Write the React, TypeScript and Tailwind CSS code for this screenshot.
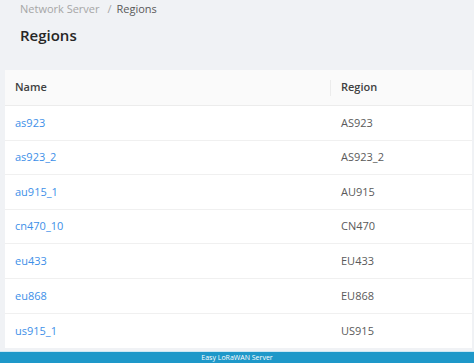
import React from "react";

const rows = [
  ["as923", "AS923"],
  ["as923_2", "AS923_2"],
  ["au915_1", "AU915"],
  ["cn470_10", "CN470"],
  ["eu433", "EU433"],
  ["eu868", "EU868"],
  ["us915_1", "US915"],
];

export default function App() {
  return (
    <div
      className="w-[474px] h-[363px] overflow-hidden bg-[#f0f2f5] flex flex-col"
      style={{ fontFamily: '"Open Sans", "Noto Sans", sans-serif' }}
    >
      <div className="h-[70px] bg-[#f0f2f5] pl-[20px] flex flex-col">
        <div className="text-[11px] leading-[18px] mt-0 text-[#a6a6a6]">
          Network Server <span className="mx-[5px]">/</span>
          <span className="text-[#595959]">Regions</span>
        </div>
        <div className="mt-[7px] text-[15px] font-semibold leading-[20px] text-[#262626]">
          Regions
        </div>
      </div>
      <div className="ml-[5px] mr-[2px] bg-white">
        <div className="h-[36px] bg-[#fafafa] border-b border-[#ececec] flex items-center text-[11px] font-semibold text-[#404040]">
          <div className="w-[326px] pl-[10px] relative h-full flex items-center">
            Name
            <div className="absolute right-0 top-[10px] h-[16px] w-px bg-[#ececec]" />
          </div>
          <div className="pl-[10px]">Region</div>
        </div>
        {rows.map(([n, r], i) => (
          <div
            key={n}
            className={`h-[34.6px] flex items-center text-[11px] ${i < rows.length - 1 ? "border-b border-[#f0f0f0]" : ""}`}
          >
            <div className="w-[326px] pl-[10px] text-[#3d8fe8]">{n}</div>
            <div className="pl-[10px] text-[#5a5a5a]">{r}</div>
          </div>
        ))}
      </div>
      <div className="mt-[3px] h-px bg-[#cde8f4]" />
      <div className="flex-1 bg-[#1e98c9] flex items-center justify-center text-[7px] text-white leading-none">
        Easy LoRaWAN Server
      </div>
    </div>
  );
}
